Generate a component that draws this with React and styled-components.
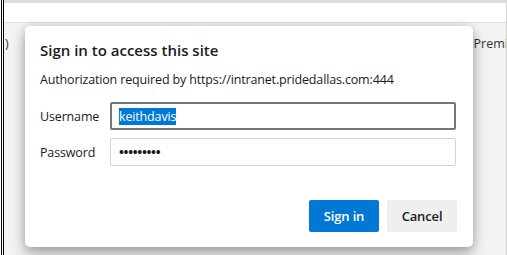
import React from 'react';
import styled, { createGlobalStyle } from 'styled-components';

const GlobalStyle = createGlobalStyle`
  html, body {
    margin: 0;
    padding: 0;
    background: #fff;
  }
  body {
    font-family: "Open Sans", "Noto Sans", sans-serif;
    color: #1b1b1b;
  }
`

const Frame = styled.div`
  position: relative;
  margin-left: 1px;
  width: 502px;
  height: 255px;
  overflow: hidden;
  border-left: 3px double #000;
  border-right: 1px solid #d4d4d4;
  background: #f3f3f3;
  background-clip: padding-box;
  display: flex;
  flex-direction: column;
`

const TopBand = styled.div`
  height: 3px;
  background: #dcdcdc;
`

const AddressStrip = styled.div`
  height: 19px;
  background: #fff;
  border-bottom: 1px solid #e2e2e2;
`

const BackRow = styled.div`
  display: flex;
  justify-content: space-between;
  padding: 12px 0 0 1px;
  font-size: 12.5px;
  color: #333;
  white-space: nowrap;
  span:last-child {
    margin-right: -9px;
  }
`

const Dialog = styled.div`
  position: absolute;
  left: 21px;
  top: 26px;
  width: 448px;
  height: 221px;
  box-sizing: border-box;
  padding: 14px 16px 15px 15px;
  background: #fff;
  border-radius: 5px;
  box-shadow: 0 7px 14px rgba(0, 0, 0, 0.3), 0 0 10px rgba(0, 0, 0, 0.12);
  display: flex;
  flex-direction: column;
`

const Title = styled.h1`
  margin: 0;
  font-size: 15px;
  font-weight: 600;
  line-height: 20px;
`

const Subtitle = styled.p`
  margin: 11px 0 0;
  font-size: 12.5px;
  line-height: 18px;
  letter-spacing: -0.15px;
`

const Fields = styled.div`
  margin-top: 13px;
  display: flex;
  flex-direction: column;
  gap: 8px;
`

const Row = styled.label`
  display: flex;
  align-items: center;
`

const Label = styled.span`
  width: 70px;
  font-size: 12.5px;
  letter-spacing: -0.15px;
`

const Input = styled.div`
  width: 346px;
  height: 28px;
  box-sizing: border-box;
  display: flex;
  align-items: center;
  padding-left: ${p => (p.$focused ? '7px' : '8px')};
  border: ${p => (p.$focused ? '2px solid #767676' : '1px solid #d4d4d4')};
  border-radius: 2px;
  font-size: 12.5px;
  letter-spacing: -0.15px;
`

const Selected = styled.span`
  background: #0078d7;
  color: #fff;
  line-height: 17px;
`

const Dots = styled.span`
  font-size: 13px;
  font-weight: 700;
  letter-spacing: -0.3px;
  color: #1b1b1b;
`

const Actions = styled.div`
  margin-top: auto;
  display: flex;
  justify-content: flex-end;
  gap: 8px;
`

const Button = styled.button`
  width: 70px;
  height: 32px;
  border: none;
  border-radius: 2px;
  font-family: inherit;
  font-size: 13px;
  font-weight: 600;
  letter-spacing: -0.15px;
  background: ${p => (p.$primary ? '#0078d4' : '#efefef')};
  color: ${p => (p.$primary ? '#fff' : '#1b1b1b')};
`

export default function App() {
  return (
    <>
      <GlobalStyle />
      <Frame>
        <TopBand />
        <AddressStrip />
        <BackRow>
          <span>)</span>
          <span>Premie</span>
        </BackRow>
        <Dialog>
          <Title>Sign in to access this site</Title>
          <Subtitle>Authorization required by https://intranet.pridedallas.com:444</Subtitle>
          <Fields>
            <Row>
              <Label>Username</Label>
              <Input $focused>
                <Selected>keithdavis</Selected>
              </Input>
            </Row>
            <Row>
              <Label>Password</Label>
              <Input>
                <Dots>•••••••••</Dots>
              </Input>
            </Row>
          </Fields>
          <Actions>
            <Button $primary>Sign in</Button>
            <Button>Cancel</Button>
          </Actions>
        </Dialog>
      </Frame>
    </>
  );
}
